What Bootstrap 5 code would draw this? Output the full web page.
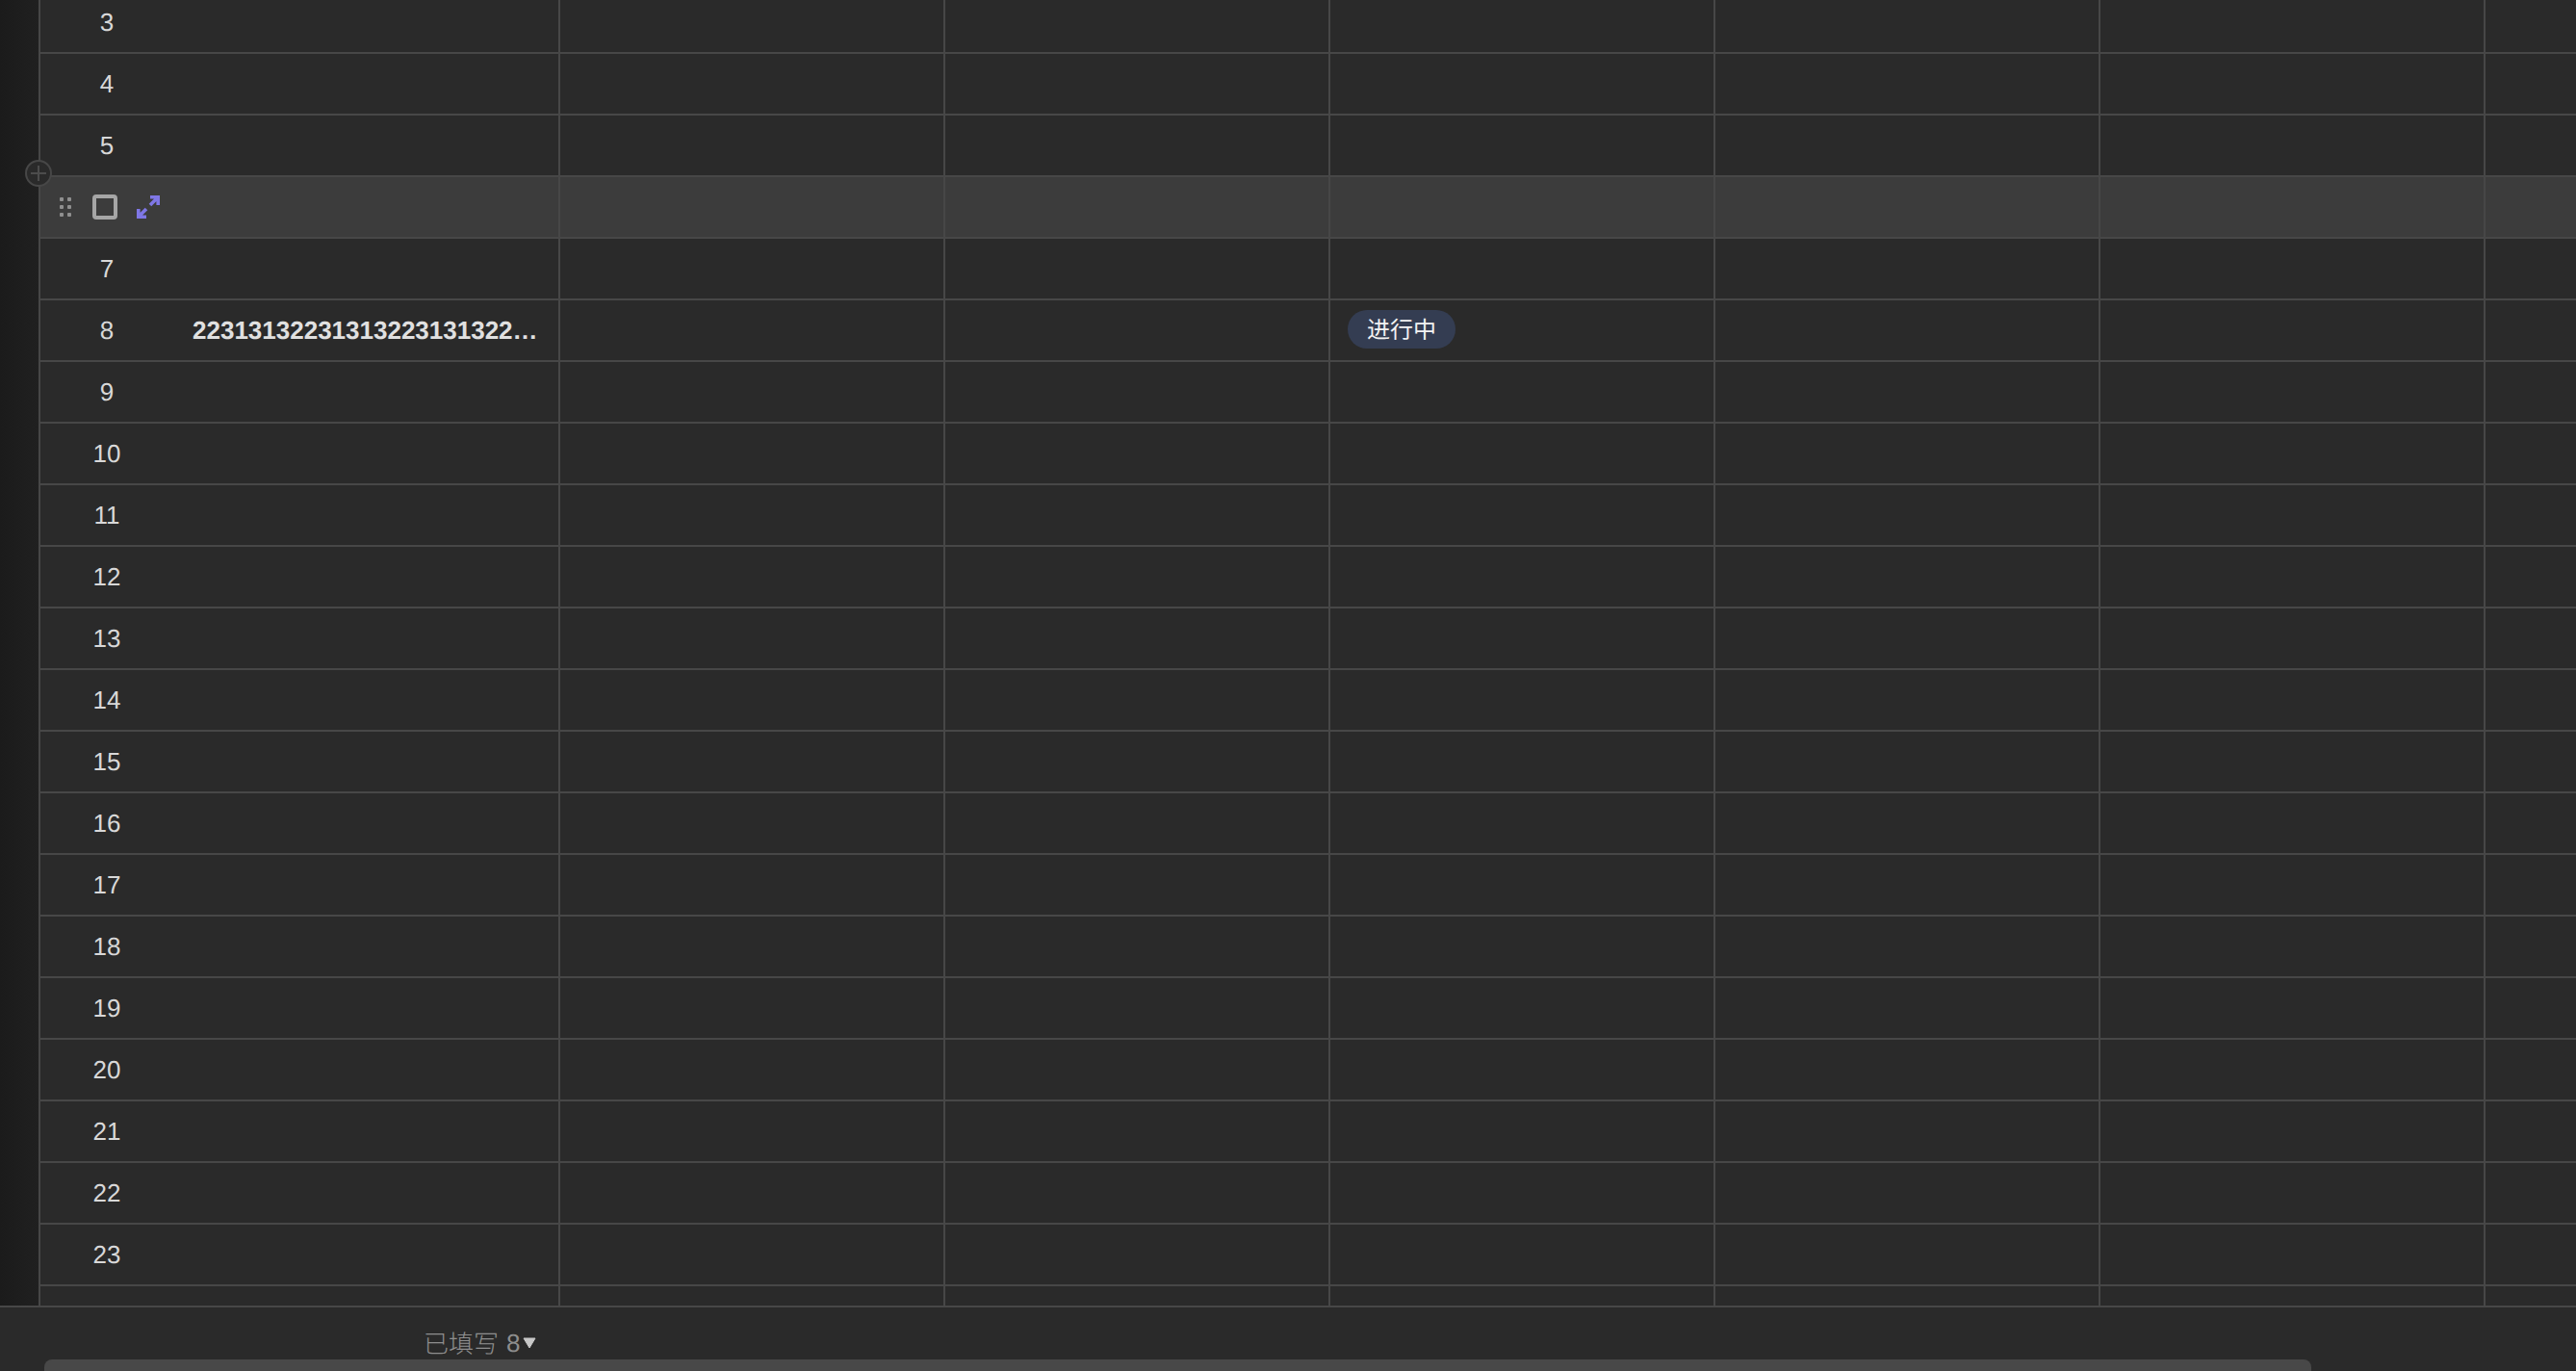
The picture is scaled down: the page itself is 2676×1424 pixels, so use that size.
<!DOCTYPE html>
<html lang="zh-CN">
<head>
<meta charset="utf-8">
<title>表格</title>
<link href="https://cdn.jsdelivr.net/npm/bootstrap@5.3.0/dist/css/bootstrap.min.css" rel="stylesheet">
<style>
html,body{height:100%;}
body{background:#2a2a2a;font-family:"Liberation Sans","Noto Sans CJK SC",sans-serif;font-size:26px;color:#d8d8d8;overflow:hidden;text-rendering:geometricPrecision;}
.side-strip{width:40px;background:linear-gradient(90deg,#1b1b1b,#202020);}
.sheet-wrap{min-width:0;min-height:0;overflow:hidden;}
.sheet{width:2636px;margin:-8px 0 0 0;table-layout:fixed;border-collapse:separate;border-spacing:0;border-left:2px solid #474747;color:#d8d8d8;--bs-table-bg:transparent;--bs-table-color:#d8d8d8;}
.sheet>tbody>tr>td{height:64px;padding:0;border:0;border-right:2px solid #474747;border-bottom:2px solid #474747;vertical-align:middle;background:transparent;box-shadow:none;color:#d8d8d8;}
.sheet>tbody>tr>td:last-child{border-right:0;}
.sheet>tbody>tr.is-hover>td{background:#3c3c3c;}
.c-main{width:540px;}
.c-std{width:400px;}
.row-num{width:138px;text-align:center;flex:none;}
.row-name{min-width:0;padding-left:20px;padding-right:20px;font-weight:700;white-space:nowrap;overflow:hidden;text-overflow:ellipsis;color:#e0e0e0;}
.row-tools{gap:14px;padding-left:20px;}
.check-box{width:26px;height:26px;border:4px solid #a6a6a6;border-radius:4px;}
.status-pill{width:fit-content;height:40px;line-height:38px;margin:0 0 2px 18px;padding:0 20px;border-radius:20px;background:#343d52;color:#f2f2f2;font-size:24px;font-family:"Noto Sans CJK SC",sans-serif;}
.add-row{left:26px;top:166px;width:28px;height:28px;z-index:2;}
.foot-bar{height:68px;border-top:2px solid #474747;background:#2a2a2a;}
.foot-text{padding:20px 0 0 440px;height:54px;line-height:32px;color:#8e8e8e;font-family:"Noto Sans CJK SC",sans-serif;font-weight:300;font-size:26px;}
.foot-num{font-family:"Liberation Sans",sans-serif;font-size:26px;margin-left:8px;}
.foot-caret{margin-left:3px;}
.expand-ico{margin-left:5px;}
.scroll-thumb{margin-left:46px;width:2355px;height:12px;background:#484848;border-radius:8px 8px 0 0;}
</style>
</head>
<body class="d-flex flex-column position-relative">
<svg class="add-row position-absolute" viewBox="0 0 28 28"><circle cx="14" cy="14" r="13" fill="#2a2a2a" stroke="#474747" stroke-width="2"/><path d="M14 6v16M6 14h16" stroke="#4c4c4c" stroke-width="2"/></svg>
<div class="d-flex flex-grow-1 sheet-wrap">
  <div class="side-strip flex-shrink-0"></div>
  <div class="flex-grow-1 sheet-wrap">
    <table class="table mb-0 sheet" id="sheet">
      <colgroup><col class="c-main"><col class="c-std"><col class="c-std"><col class="c-std"><col class="c-std"><col class="c-std"><col></colgroup>
      <tbody>
      <tr><td><div class="row-num">3</div></td><td></td><td></td><td></td><td></td><td></td><td></td></tr>
      <tr><td><div class="row-num">4</div></td><td></td><td></td><td></td><td></td><td></td><td></td></tr>
      <tr><td><div class="row-num">5</div></td><td></td><td></td><td></td><td></td><td></td><td></td></tr>
      <tr class="is-hover"><td><div class="d-flex align-items-center row-tools">
        <svg width="12" height="20" viewBox="0 0 12 20" fill="#8f8f8f"><rect x="0" y="0" width="4" height="4" rx="1"/><rect x="8" y="0" width="4" height="4" rx="1"/><rect x="0" y="8" width="4" height="4" rx="1"/><rect x="8" y="8" width="4" height="4" rx="1"/><rect x="0" y="16" width="4" height="4" rx="1"/><rect x="8" y="16" width="4" height="4" rx="1"/></svg>
        <div class="check-box ms-2"></div>
        <svg class="expand-ico" width="26" height="26" viewBox="0 0 26 26" fill="none" stroke="#7f77e6" stroke-width="3.6"><path d="M15 2.800h8.200v8.200M23 3l-8 8"/><path d="M2.800 15v8.200h8.200M3 23l8-8"/></svg>
      </div></td><td></td><td></td><td></td><td></td><td></td><td></td></tr>
      <tr><td><div class="row-num">7</div></td><td></td><td></td><td></td><td></td><td></td><td></td></tr>
      <tr><td><div class="d-flex align-items-center"><div class="row-num">8</div><div class="row-name">2231313223131322313132231313223131322</div></div></td><td></td><td></td><td><div class="status-pill">进行中</div></td><td></td><td></td><td></td></tr>
      <tr><td><div class="row-num">9</div></td><td></td><td></td><td></td><td></td><td></td><td></td></tr>
      <tr><td><div class="row-num">10</div></td><td></td><td></td><td></td><td></td><td></td><td></td></tr>
      <tr><td><div class="row-num">11</div></td><td></td><td></td><td></td><td></td><td></td><td></td></tr>
      <tr><td><div class="row-num">12</div></td><td></td><td></td><td></td><td></td><td></td><td></td></tr>
      <tr><td><div class="row-num">13</div></td><td></td><td></td><td></td><td></td><td></td><td></td></tr>
      <tr><td><div class="row-num">14</div></td><td></td><td></td><td></td><td></td><td></td><td></td></tr>
      <tr><td><div class="row-num">15</div></td><td></td><td></td><td></td><td></td><td></td><td></td></tr>
      <tr><td><div class="row-num">16</div></td><td></td><td></td><td></td><td></td><td></td><td></td></tr>
      <tr><td><div class="row-num">17</div></td><td></td><td></td><td></td><td></td><td></td><td></td></tr>
      <tr><td><div class="row-num">18</div></td><td></td><td></td><td></td><td></td><td></td><td></td></tr>
      <tr><td><div class="row-num">19</div></td><td></td><td></td><td></td><td></td><td></td><td></td></tr>
      <tr><td><div class="row-num">20</div></td><td></td><td></td><td></td><td></td><td></td><td></td></tr>
      <tr><td><div class="row-num">21</div></td><td></td><td></td><td></td><td></td><td></td><td></td></tr>
      <tr><td><div class="row-num">22</div></td><td></td><td></td><td></td><td></td><td></td><td></td></tr>
      <tr><td><div class="row-num">23</div></td><td></td><td></td><td></td><td></td><td></td><td></td></tr>
      <tr><td></td><td></td><td></td><td></td><td></td><td></td><td></td></tr>
      </tbody>
    </table>
  </div>
</div>
<div class="foot-bar flex-shrink-0 overflow-hidden">
  <div class="foot-text d-flex align-items-center">已填写<span class="foot-num">8</span><svg class="foot-caret" width="14" height="12" viewBox="0 0 14 12"><path d="M1 1h12L7 11z" fill="#c8c8c8" stroke="#c8c8c8" stroke-linejoin="round"/></svg></div>
  <div class="scroll-thumb"></div>
</div>
<script src="https://cdn.jsdelivr.net/npm/bootstrap@5.3.0/dist/js/bootstrap.bundle.min.js"></script>
</body>
</html>
